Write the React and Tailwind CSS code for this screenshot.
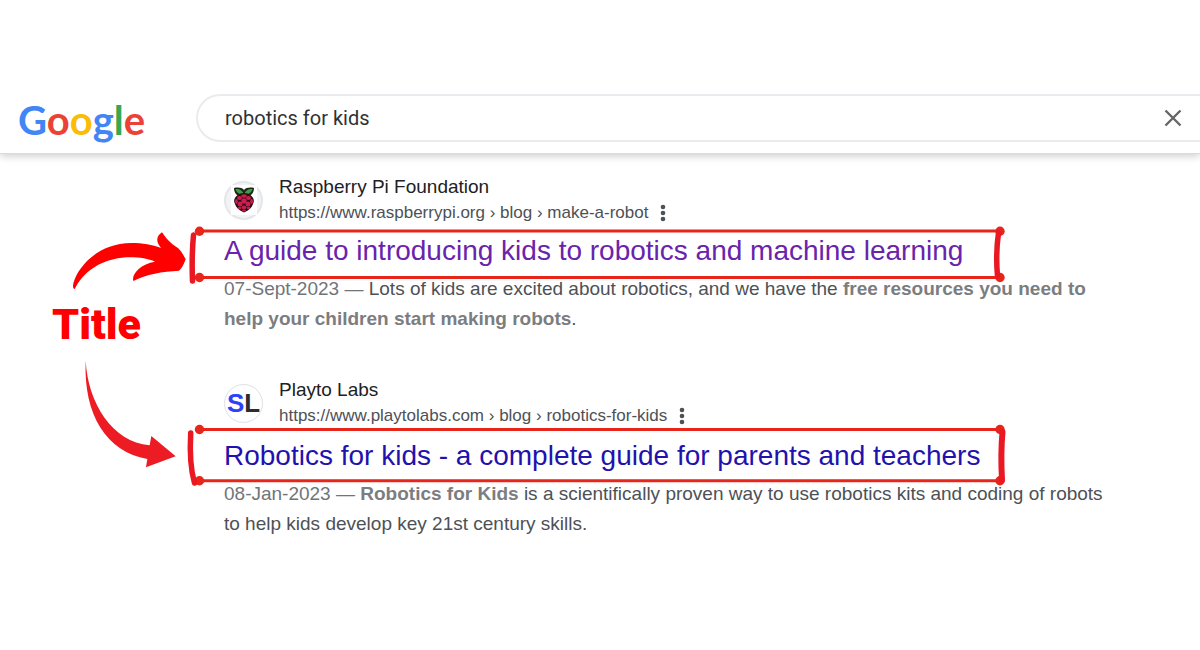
import { useState } from "react";

const results = [
  {
    id: "raspberry",
    site: "Raspberry Pi Foundation",
    url: "https://www.raspberrypi.org › blog › make-a-robot",
    title: "A guide to introducing kids to robotics and machine learning",
    titleStyle: "h-[48px] pt-[2px] text-[#6a23ab]",
    icon: <RaspberryIcon />,
    frame: <FirstFrame />,
    date: "07-Sept-2023",
    snippet: (
      <>
        Lots of kids are excited about robotics, and we have the{" "}
        <b className="text-[#7b7d80]">
          free resources you need to help your children start making robots
        </b>
        .
      </>
    ),
  },
  {
    id: "playto",
    site: "Playto Labs",
    url: "https://www.playtolabs.com › blog › robotics-for-kids",
    title: "Robotics for kids - a complete guide for parents and teachers",
    titleStyle: "h-[50px] pt-[4px] text-[#1f12ad]",
    icon: <PlaytoIcon />,
    frame: <SecondFrame />,
    date: "08-Jan-2023",
    snippet: (
      <>
        <b className="text-[#7b7d80]">Robotics for Kids</b> is a scientifically
        proven way to use robotics kits and coding of robots to help kids
        develop key 21st century skills.
      </>
    ),
  },
];

function Logo() {
  return (
    <a
      href="#home"
      className="ml-[18px] w-[178px] shrink-0 pt-1 font-['Lato',sans-serif] text-[40px] leading-[44px] font-bold"
    >
      <span className="text-[#4285f4]">G</span>
      <span className="text-[#ea4335]">o</span>
      <span className="text-[#fbbc05]">o</span>
      <span className="text-[#4285f4]">g</span>
      <span className="text-[#34a853]">l</span>
      <span className="text-[#ea4335]">e</span>
    </a>
  );
}

function RaspberryIcon() {
  return (
    <span className="flex size-[39px] items-center justify-center rounded-full border-2 border-[#e4e6ea] bg-[#f1f3f4]">
      <svg viewBox="0 0 26 30" className="h-[30px] w-[26px]">
        <rect width="26" height="30" fill="#fff" />
        <path
          d="M3 3c4-1 8-.5 10 2 2-2.500 6-3 10-2 0 4-2 7-5 8H8C5 10 3 7 3 3z"
          fill="#1d2a1b"
        />
        <path d="M4.500 4c3.500-.4 7 1 8 5-3.500 1-7-1-8-5zM21.500 4c-3.500-.4-7 1-8 5 3.500 1 7-1 8-5z" fill="#3fa043" />
        <path
          d="M13 8c3 0 6 1 8 3.500 2 2 2.500 5 1 7.500-1 3.500-4 6.500-9 8.500-5-2-8-5-9-8.500-1.500-2.500-1-5.500 1-7.500C7 9 10 8 13 8z"
          fill="#2a0d15"
        />
        <g fill="#cb1d4e">
          <ellipse cx="13" cy="11" rx="2.800" ry="1.700" />
          <ellipse cx="8.500" cy="13" rx="2.500" ry="2" />
          <ellipse cx="17.500" cy="13" rx="2.500" ry="2" />
          <circle cx="13" cy="16" r="2.700" />
          <ellipse cx="5.400" cy="16.500" rx="1.400" ry="2.400" />
          <ellipse cx="20.600" cy="16.500" rx="1.400" ry="2.400" />
          <circle cx="9" cy="19" r="2.500" />
          <circle cx="17" cy="19" r="2.500" />
          <ellipse cx="13" cy="22.300" rx="2.400" ry="1.900" />
          <ellipse cx="8.500" cy="22.900" rx="1.700" ry="1.200" />
          <ellipse cx="17.500" cy="22.900" rx="1.700" ry="1.200" />
          <ellipse cx="13" cy="25.500" rx="1.800" ry=".9" />
        </g>
      </svg>
    </span>
  );
}

function PlaytoIcon() {
  return (
    <span className="flex size-[39px] items-center justify-center rounded-full border border-[#dfe1e5] text-[26px] leading-none font-bold">
      <span className="text-[#2f40fa]">S</span>
      <span className="text-[#2b2c2f]">L</span>
    </span>
  );
}

function FirstFrame() {
  return (
    <svg
      viewBox="184 222 826 70"
      className="pointer-events-none absolute -top-1 -left-10 h-[70px] w-[826px]"
      fill="none"
      strokeLinecap="round"
    >
      <path d="M199 231H1000M199 277.500H1000" stroke="#e8251b" strokeWidth="3" />
      <g fill="#e8251b">
        <circle cx="199.500" cy="231.300" r="4.700" />
        <circle cx="199.500" cy="277.500" r="4.700" />
        <circle cx="1000" cy="231.300" r="4.700" />
        <circle cx="1000" cy="277.500" r="4.700" />
      </g>
      <path d="M193.500 235Q191.500 256 192.500 281" stroke="#ea1822" strokeWidth="5.500" />
      <path d="M998.500 233Q995.500 254 997.500 276" stroke="#ea1822" strokeWidth="5.500" />
    </svg>
  );
}

function SecondFrame() {
  return (
    <svg
      viewBox="184 421 826 70"
      className="pointer-events-none absolute -top-2 -left-10 h-[70px] w-[826px]"
      fill="none"
      strokeLinecap="round"
    >
      <path d="M199 429.500H1000M199 480.800H1000" stroke="#e8251b" strokeWidth="3" />
      <g fill="#e8251b">
        <circle cx="199.500" cy="429.500" r="4.700" />
        <circle cx="199.500" cy="480.800" r="4.700" />
        <circle cx="1000" cy="429.500" r="4.700" />
        <circle cx="1000" cy="480.800" r="4.700" />
      </g>
      <path d="M190.700 433Q189 464 194.500 483" stroke="#ea1822" strokeWidth="5.500" />
      <path d="M1002.500 432Q1000.500 454 1002 480" stroke="#ea1822" strokeWidth="6" />
    </svg>
  );
}

function Annotation() {
  return (
    <aside className="w-[224px] shrink-0 pt-[76px] text-[#ff0000]">
      <svg viewBox="120 30 360 180" className="ml-[70px] h-[60px] w-[120px]" fill="currentColor">
        <path d="M134 207C128 207 128 196 131 187C145 139 206 69 304 69C339 69 366 74 393 84C379 67 376 51 396 37C415 66 432 77 444 84C453 92 461 106 467 118C461 134 455 146 447 152C398 155 348 162 310 183C306 171 315 157 326 147C338 136 355 128 375 125C351 114 313 110 276 113C206 121 158 159 134 207Z" />
      </svg>
      <p className="ml-[52px] pt-2 font-['Roboto',sans-serif] text-[43px] leading-[52px] font-black">
        Title
      </p>
      <svg viewBox="150 60 300 330" className="mt-[10px] ml-[80px] h-[110px] w-[100px]" fill="#ed1c24">
        <path d="M167 62C174 190 247 305 359 316L364 288L437 349L348 382L352 357C230 335 160 225 167 62Z" />
      </svg>
    </aside>
  );
}

function Result({ item }) {
  return (
    <article>
      <div className="flex items-center gap-4">
        {item.icon}
        <div>
          <p className="text-[19px] leading-[26px] text-[#202124]">{item.site}</p>
          <div className="flex items-center gap-[10px] text-[#4d5156]">
            <cite className="text-[17px] leading-[26px] not-italic">{item.url}</cite>
            <button type="button" aria-label="About this result">
              <svg viewBox="0 0 10 18" className="h-[18px] w-[10px]" fill="currentColor">
                <circle cx="5" cy="3" r="2.300" />
                <circle cx="5" cy="9" r="2.300" />
                <circle cx="5" cy="15" r="2.300" />
              </svg>
            </button>
          </div>
        </div>
      </div>
      <h3 className="relative">
        <a
          href={`#${item.id}`}
          className={`flex items-center text-[28px] whitespace-nowrap ${item.titleStyle}`}
        >
          {item.title}
        </a>
        {item.frame}
      </h3>
      <p className="max-w-[890px] text-[19px] leading-[30px] text-[#4d5156]">
        <span className="text-[#70757a]">{item.date} — </span>
        {item.snippet}
      </p>
    </article>
  );
}

export default function App() {
  const [query, setQuery] = useState("robotics for kids");

  return (
    <div className="min-h-screen overflow-x-hidden bg-white font-['Liberation_Sans',sans-serif]">
      <header className="flex items-center border-b border-[#dcdcdc] pt-[94px] pb-[11px] shadow-[0_2px_8px_rgba(0,0,0,0.2)]">
        <Logo />
        <form
          onSubmit={(e) => e.preventDefault()}
          className="flex h-[48px] flex-1 items-center rounded-l-full border-2 border-r-0 border-[#ebebef] pr-[17px] pl-[27px]"
        >
          <input
            type="text"
            aria-label="Search"
            value={query}
            onChange={(e) => setQuery(e.target.value)}
            className="min-w-0 flex-1 font-['Roboto',sans-serif] text-[20px] text-[#303134] outline-none"
          />
          <button type="button" aria-label="Clear" onClick={() => setQuery("")}>
            <svg viewBox="0 0 20 20" className="size-5" stroke="#666" strokeWidth="2.400">
              <path d="M2.500 2.500l15 15M17.500 2.500l-15 15" />
            </svg>
          </button>
        </form>
      </header>

      <div className="flex">
        <Annotation />
        <main className="flex min-w-0 flex-1 flex-col gap-[43px] pt-5">
          {results.map((item) => (
            <Result key={item.id} item={item} />
          ))}
        </main>
      </div>
    </div>
  );
}
